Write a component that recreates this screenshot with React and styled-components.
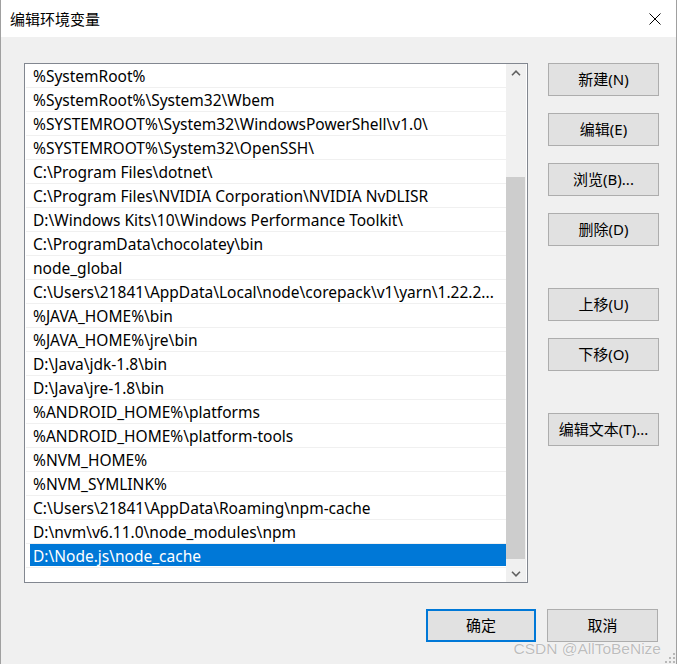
import React from "react";
import styled, { createGlobalStyle } from "styled-components";

const Global = createGlobalStyle`
  html, body { margin: 0; padding: 0; background: #f0f0f0; }
  * { box-sizing: border-box; }
`;

const FONT = `"Noto Sans", "Noto Sans CJK SC", sans-serif`;

const Window = styled.div`
  position: relative;
  width: 677px;
  height: 664px;
  display: flex;
  flex-direction: column;
  background: #f0f0f0;
  font-family: ${FONT};
  color: #000;
  border-left: 1px solid #a0a0a0;
  border-right: 1px solid #a0a0a0;
  overflow: hidden;
`;

const TitleBar = styled.div`
  height: 37px;
  flex: none;
  background: #fff;
  display: flex;
  align-items: center;
  justify-content: space-between;
  padding-left: 9px;
`;

const Title = styled.div`
  font-size: 15px;
  line-height: 1;
  font-family: "Noto Sans CJK SC", sans-serif;
`;

const CloseButton = styled.div`
  width: 42px;
  height: 37px;
  display: flex;
  align-items: center;
  justify-content: center;
`;

const Body = styled.div`
  flex: 1;
  display: flex;
  flex-direction: column;
  padding: 26px 0 0 23px;
`;

const Main = styled.div`
  display: flex;
  align-items: flex-start;
`;

const ListBox = styled.div`
  width: 504px;
  height: 520px;
  border: 1px solid #828790;
  background: #fff;
  display: flex;
  padding-right: 1px;
`;

const Rows = styled.div`
  flex: 1;
  padding-left: 1px;
  overflow: hidden;
`;

const Row = styled.div`
  height: 24px;
  border-bottom: 1px solid #f0f0f0;
  display: flex;
  align-items: stretch;
`;

const RowLabel = styled.div`
  flex: 1;
  margin: ${(p) => (p.$selected ? "0 0 1px 4px" : "0")};
  padding-left: ${(p) => (p.$selected ? "3px" : "7px")};
  padding-top: 1px;
  background: ${(p) => (p.$selected ? "#0078d7" : "transparent")};
  color: ${(p) => (p.$selected ? "#fff" : "#000")};
  font-size: 15.5px;
  line-height: 22px;
  white-space: nowrap;
  overflow: hidden;
`;

const ScrollBar = styled.div`
  width: 20px;
  flex: none;
  background: #f0f0f0;
  display: flex;
  flex-direction: column;
`;

const ArrowBox = styled.div`
  height: 17px;
  flex: none;
  display: flex;
  align-items: center;
  justify-content: center;
`;

const Track = styled.div`
  flex: 1;
  display: flex;
  flex-direction: column;
  padding: 96px 1px 1px 0;
`;

const Thumb = styled.div`
  height: 382px;
  background: #cdcdcd;
`;

const ButtonColumn = styled.div`
  margin-left: 20px;
  display: flex;
  flex-direction: column;
`;

const Button = styled.button`
  width: 111px;
  height: 33px;
  margin-top: ${(p) => p.$gap || 0}px;
  background: #e1e1e1;
  border: ${(p) => (p.$default ? "2px solid #0078d7" : "1px solid #adadad")};
  font-family: ${FONT};
  font-size: 15px;
  color: #000;
  padding: 0;
  display: flex;
  align-items: center;
  justify-content: center;
  line-height: 1;
`;

const Footer = styled.div`
  display: flex;
  justify-content: flex-end;
  gap: 11px;
  padding-right: 18px;
  margin-top: 26px;
`;

const WideButton = styled(Button)`
  width: ${(p) => (p.$default ? "110px" : "111px")};
  height: 33px;
`;

const Watermark = styled.div`
  position: absolute;
  right: 15px;
  bottom: 8px;
  font-family: "Liberation Sans", Arial, sans-serif;
  font-size: 15.5px;
  color: #bdbdbd;
  text-shadow: 0 0 1px #fff, 0 0 1px #fff;
  line-height: 1;
  pointer-events: none;
`;

const Grip = styled.svg`
  position: absolute;
  right: 1px;
  bottom: 1px;
`;

const items = [
  "%SystemRoot%",
  "%SystemRoot%\\System32\\Wbem",
  "%SYSTEMROOT%\\System32\\WindowsPowerShell\\v1.0\\",
  "%SYSTEMROOT%\\System32\\OpenSSH\\",
  "C:\\Program Files\\dotnet\\",
  "C:\\Program Files\\NVIDIA Corporation\\NVIDIA NvDLISR",
  "D:\\Windows Kits\\10\\Windows Performance Toolkit\\",
  "C:\\ProgramData\\chocolatey\\bin",
  "node_global",
  "C:\\Users\\21841\\AppData\\Local\\node\\corepack\\v1\\yarn\\1.22.2...",
  "%JAVA_HOME%\\bin",
  "%JAVA_HOME%\\jre\\bin",
  "D:\\Java\\jdk-1.8\\bin",
  "D:\\Java\\jre-1.8\\bin",
  "%ANDROID_HOME%\\platforms",
  "%ANDROID_HOME%\\platform-tools",
  "%NVM_HOME%",
  "%NVM_SYMLINK%",
  "C:\\Users\\21841\\AppData\\Roaming\\npm-cache",
  "D:\\nvm\\v6.11.0\\node_modules\\npm",
  "D:\\Node.js\\node_cache",
];

const Chevron = ({ up }) => (
  <svg width="10" height="6" viewBox="0 0 10 6">
    <path
      d={up ? "M1 5.2 L5 1.2 L9 5.2" : "M1 0.8 L5 4.8 L9 0.8"}
      fill="none"
      stroke="#606060"
      strokeWidth="1.6"
    />
  </svg>
);

export default function App() {
  return (
    <>
      <Global />
      <Window>
        <TitleBar>
          <Title>编辑环境变量</Title>
          <CloseButton>
            <svg width="12" height="12" viewBox="0 0 12 12">
              <path d="M0.5 0.5 L11.5 11.5 M11.5 0.5 L0.5 11.5" stroke="#000" strokeWidth="1" />
            </svg>
          </CloseButton>
        </TitleBar>
        <Body>
          <Main>
            <ListBox>
              <Rows>
                {items.map((t, i) => (
                  <Row key={i}>
                    <RowLabel $selected={i === items.length - 1}>{t}</RowLabel>
                  </Row>
                ))}
              </Rows>
              <ScrollBar>
                <ArrowBox>
                  <Chevron up />
                </ArrowBox>
                <Track>
                  <Thumb />
                </Track>
                <ArrowBox>
                  <Chevron />
                </ArrowBox>
              </ScrollBar>
            </ListBox>
            <ButtonColumn>
              <Button>新建(N)</Button>
              <Button $gap={17}>编辑(E)</Button>
              <Button $gap={17}>浏览(B)...</Button>
              <Button $gap={17}>删除(D)</Button>
              <Button $gap={42}>上移(U)</Button>
              <Button $gap={17}>下移(O)</Button>
              <Button $gap={42}>编辑文本(T)...</Button>
            </ButtonColumn>
          </Main>
          <Footer>
            <WideButton $default>确定</WideButton>
            <WideButton>取消</WideButton>
          </Footer>
        </Body>
        <Watermark>CSDN @AllToBeNize</Watermark>
        <Grip width="12" height="12" viewBox="0 0 12 12">
          {[[10, 2], [10, 6], [6, 6], [10, 10], [6, 10], [2, 10]].map(([x, y], i) => (
            <rect key={i} x={x} y={y} width="2" height="2" fill="#b8b8b8" />
          ))}
        </Grip>
      </Window>
    </>
  );
}
